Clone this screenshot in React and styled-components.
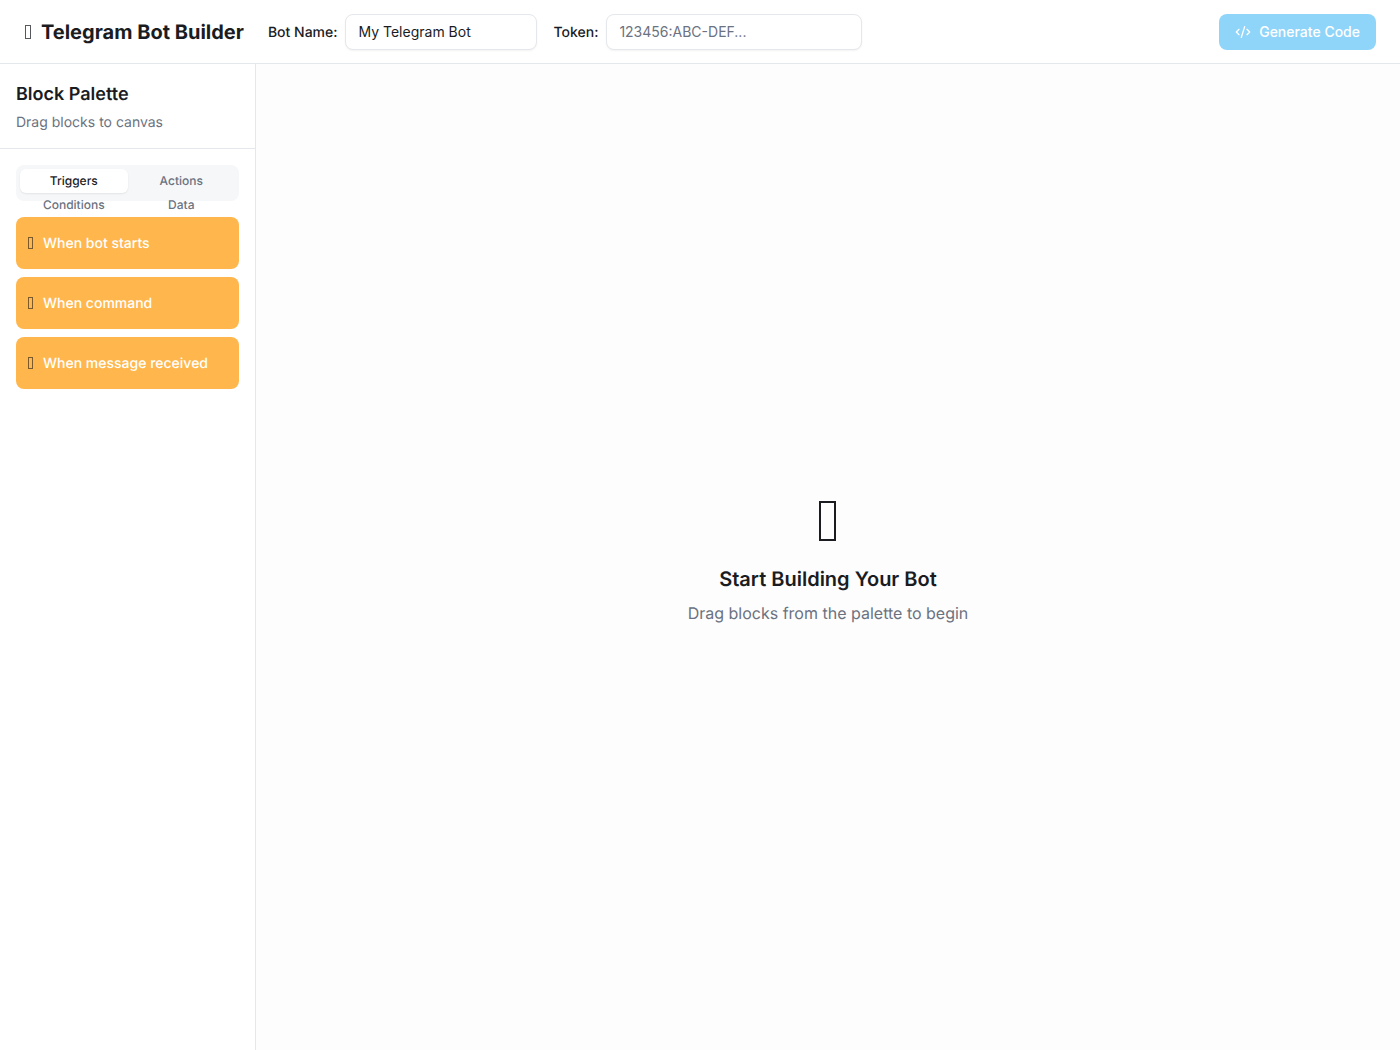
import React from "react";
import styled, { createGlobalStyle } from "styled-components";
import { CodeXml } from "lucide-react";

const Global = createGlobalStyle`
  * { box-sizing: border-box; }
  html, body { margin: 0; padding: 0; }
  body {
    font-family: Inter, "Liberation Sans", sans-serif;
    font-feature-settings: "rlig" 1, "calt" 1;
    -webkit-font-smoothing: antialiased;
    text-rendering: geometricPrecision;
    color: #1a1c1f;
    background: #fff;
  }
`;

const Page = styled.div`
  display: flex;
  flex-direction: column;
  height: 1050px;
  overflow: hidden;
`;

const Header = styled.header`
  flex: none;
  height: 64px;
  display: flex;
  align-items: center;
  justify-content: space-between;
  padding: 0 24px;
  background: #fff;
  border-bottom: 1px solid #e4e7ec;
`;

const HeaderLeft = styled.div`
  display: flex;
  align-items: center;
  gap: 24px;
`;

const Title = styled.h1`
  margin: 0;
  display: flex;
  align-items: center;
  gap: 8px;
  font-size: 20px;
  line-height: 28px;
  font-weight: 700;
  color: #1a1c1f;
`;

const MissingGlyph = styled.span`
  flex: none;
  display: block;
  width: ${(p) => p.$w}px;
  height: ${(p) => p.$h}px;
  margin-left: ${(p) => p.$before || 0}px;
  margin-right: ${(p) => p.$after || 0}px;
  border: ${(p) => p.$stroke || 1}px solid ${(p) => p.$color || "#1a1c1f"};
`;

const Fields = styled.div`
  display: flex;
  align-items: center;
  gap: 16px;
`;

const Field = styled.div`
  display: flex;
  align-items: center;
  gap: 8px;
`;

const Label = styled.label`
  padding-top: 2px;
  font-size: 14px;
  line-height: 14px;
  font-weight: 500;
  color: #1a1c1f;
`;

const Input = styled.input`
  height: 36px;
  width: ${(p) => p.$width}px;
  padding: 4px 12px;
  font: 400 14px/20px Inter, "Liberation Sans", sans-serif;
  color: #1a1c1f;
  background: #fff;
  border: 1px solid #e4e7ec;
  border-radius: 8px;
  box-shadow: 0 1px 2px rgba(0, 0, 0, 0.05);
  outline: none;
  &::placeholder { color: #6b7280; opacity: 1; }
`;

const GenerateButton = styled.button`
  height: 36px;
  display: inline-flex;
  align-items: center;
  gap: 8px;
  padding: 0 16px;
  border: 0;
  border-radius: 8px;
  background: #8fd5f9;
  color: #fff;
  font: 500 14px/20px Inter, "Liberation Sans", sans-serif;
`;

const Body = styled.div`
  flex: 1;
  display: flex;
  min-height: 0;
`;

const Sidebar = styled.aside`
  flex: none;
  width: 256px;
  background: #fff;
  border-right: 1px solid #e4e7ec;
`;

const SidebarHead = styled.div`
  height: 85px;
  padding: 17px 16px 0;
  border-bottom: 1px solid #e4e7ec;
`;

const SidebarTitle = styled.h2`
  margin: 0 0 4px;
  font-size: 18px;
  line-height: 28px;
  font-weight: 600;
  color: #1a1c1f;
`;

const SidebarSub = styled.p`
  margin: 0;
  font-size: 14px;
  line-height: 20px;
  color: #6b7280;
`;

const SidebarBody = styled.div`
  padding: 16px;
`;

const TabList = styled.div`
  display: grid;
  grid-template-columns: 1fr 1fr;
  height: 36px;
  padding: 4px;
  margin-bottom: 16px;
  border-radius: 8px;
  background: #f5f7f9;
`;

const Tab = styled.div`
  height: 24px;
  display: flex;
  align-items: center;
  justify-content: center;
  font-size: 12px;
  line-height: 16px;
  font-weight: 500;
  border-radius: 6px;
  color: ${(p) => (p.$active ? "#1a1c1f" : "#6b7280")};
  background: ${(p) => (p.$active ? "#fff" : "transparent")};
  box-shadow: ${(p) => (p.$active ? "0 1px 2px rgba(0,0,0,0.08)" : "none")};
`;

const Blocks = styled.div`
  display: flex;
  flex-direction: column;
  gap: 8px;
`;

const Block = styled.div`
  height: 52px;
  display: flex;
  align-items: center;
  gap: 8px;
  padding: 0 12px;
  border-radius: 8px;
  background: #ffb74d;
  color: #fff;
  font-size: 14px;
  line-height: 20px;
  font-weight: 500;
`;

const BlockLabel = styled.span`
  padding-top: 2px;
`;

const Canvas = styled.main`
  flex: 1;
  display: flex;
  align-items: center;
  justify-content: center;
  background: #fdfdfd;
`;

const Empty = styled.div`
  text-align: center;
`;

const EmptyIcon = styled.div`
  height: 60px;
  padding-top: 4px;
  margin-bottom: 16px;
  display: flex;
  align-items: center;
  justify-content: center;
`;

const EmptyTitle = styled.h3`
  margin: 0 0 8px;
  font-size: 20px;
  line-height: 28px;
  font-weight: 600;
  color: #1a1c1f;
`;

const EmptySub = styled.p`
  margin: 0;
  font-size: 16px;
  line-height: 24px;
  color: #6b7280;
`;

const tabs = ["Triggers", "Actions", "Conditions", "Data"];
const blocks = ["When bot starts", "When command", "When message received"];

export default function App() {
  return (
    <Page>
      <Global />
      <Header>
        <HeaderLeft>
          <Title>
            <MissingGlyph $w={6} $h={14} $before={1} $after={2} $color="#55585c" />
            <span>Telegram Bot Builder</span>
          </Title>
          <Fields>
            <Field>
              <Label>Bot Name:</Label>
              <Input $width={192} defaultValue="My Telegram Bot" />
            </Field>
            <Field>
              <Label>Token:</Label>
              <Input $width={256} placeholder="123456:ABC-DEF..." />
            </Field>
          </Fields>
        </HeaderLeft>
        <GenerateButton disabled>
          <CodeXml size={16} strokeWidth={2} />
          Generate Code
        </GenerateButton>
      </Header>
      <Body>
        <Sidebar>
          <SidebarHead>
            <SidebarTitle>Block Palette</SidebarTitle>
            <SidebarSub>Drag blocks to canvas</SidebarSub>
          </SidebarHead>
          <SidebarBody>
            <TabList>
              {tabs.map((t, i) => (
                <Tab key={t} $active={i === 0}>{t}</Tab>
              ))}
            </TabList>
            <Blocks>
              {blocks.map((label) => (
                <Block key={label}>
                  <MissingGlyph $w={5} $h={12} $after={2} $color="#7a5a2c" />
                  <BlockLabel>{label}</BlockLabel>
                </Block>
              ))}
            </Blocks>
          </SidebarBody>
        </Sidebar>
        <Canvas>
          <Empty>
            <EmptyIcon>
              <MissingGlyph $w={17} $h={40} $stroke={2} />
            </EmptyIcon>
            <EmptyTitle>Start Building Your Bot</EmptyTitle>
            <EmptySub>Drag blocks from the palette to begin</EmptySub>
          </Empty>
        </Canvas>
      </Body>
    </Page>
  );
}
